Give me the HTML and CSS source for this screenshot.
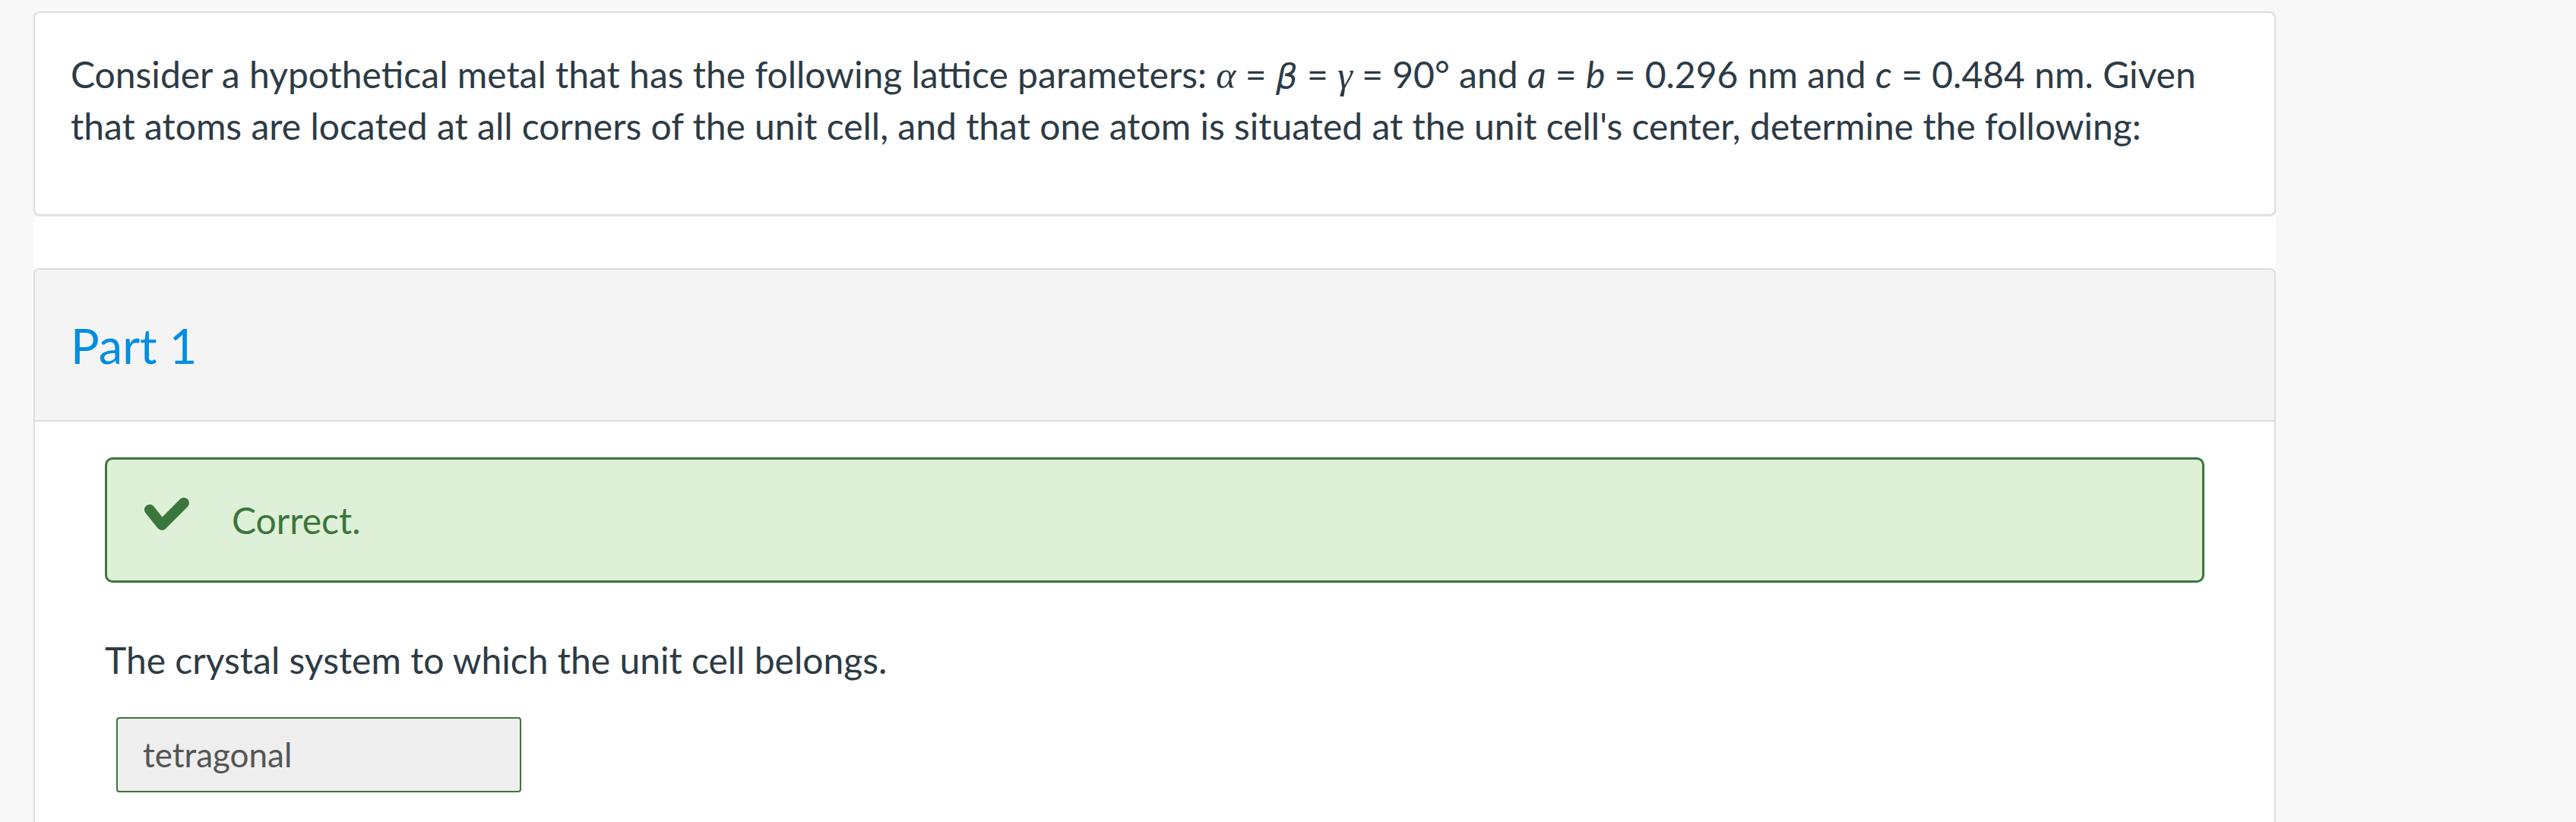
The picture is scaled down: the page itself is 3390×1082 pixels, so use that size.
FILE: index.html
```html
<!DOCTYPE html>
<html lang="en">
<head>
<meta charset="utf-8">
<title>Quiz question</title>
<link rel="stylesheet" href="styles.css">
</head>
<body>
<main class="column">
  <div class="intro">
    <section class="card intro-card">
      <p class="intro-text">Consider a hypothetical metal that has the following lattice parameters: <span class="math">α</span> = <span class="math beta">β</span> = <span class="math">γ</span> = 90° and <i>a</i> = <i>b</i> = 0.296 nm and <i>c</i> = 0.484 nm. Given that atoms are located at all corners of the unit cell, and that one atom is situated at the unit cell's center, determine the following:</p>
    </section>
  </div>
  <section class="card part">
    <header class="part-header">
      <h2 class="part-title">Part 1</h2>
    </header>
    <div class="part-body">
      <div class="alert-success">
        <svg class="check" viewBox="0 0 62 50" width="62" height="50" aria-hidden="true">
          <polyline points="9,18 25,38 54,9" fill="none" stroke="#3b763c" stroke-width="14" stroke-linecap="round" stroke-linejoin="round"/>
        </svg>
        <span class="alert-text">Correct.</span>
      </div>
      <p class="question">The crystal system to which the unit cell belongs.</p>
      <div class="answer">tetragonal</div>
    </div>
  </section>
</main>
</body>
</html>
```
FILE: styles.css
```css
html, body {
  margin: 0;
  padding: 0;
}
body {
  background: #f8f8f8;
  font-family: Lato, "Noto Sans", sans-serif;
  color: #2d3b45;
  height: 1082px;
  overflow: hidden;
}
.column {
  margin-left: 44px;
  width: 2951px;
  background: #ffffff;
  min-height: 1082px;
}
.intro {
  background: #f8f8f8;
  padding-top: 15px;
  padding-bottom: 1px;
}
.card {
  border: 2px solid #dddddd;
  border-radius: 8px;
  background: #ffffff;
}
.intro-card {
  padding: 47px 48px 50px 47px;
  box-shadow: 0 1px 2px rgba(0,0,0,0.06);
}
.intro-text {
  margin: 0 0 32px;
  font-size: 48px;
  line-height: 68px;
}
.intro-text i {
  font-style: italic;
}
.math {
  font-family: "Liberation Serif", "DejaVu Serif", serif;
  font-style: italic;
  font-size: 50px;
  line-height: 1;
}
.math.beta {
  font-family: "DejaVu Sans", Lato, sans-serif;
  font-size: 45px;
}
.part {
  margin-top: 68px;
  border-bottom: none;
  border-bottom-left-radius: 0;
  border-bottom-right-radius: 0;
  min-height: 740px;
}
.part-header {
  background: #f4f4f4;
  border-bottom: 2px solid #dddddd;
  border-radius: 6px 6px 0 0;
  height: 198px;
  display: flex;
  align-items: center;
  padding-left: 47px;
}
.part-title {
  margin: 0;
  font-size: 63px;
  font-weight: 400;
  color: #008ee2;
  line-height: 1;
}
.part-body {
  padding: 47px 92px 0 92px;
}
.alert-success {
  display: flex;
  align-items: center;
  height: 159px;
  border: 3px solid #3b763c;
  border-radius: 10px;
  background: #dff0d8;
  padding-left: 47px;
}
.check {
  display: block;
  margin-top: -14px;
}
.alert-text {
  margin-left: 55px;
  font-size: 48px;
  color: #3b763c;
}
.question {
  margin: 68px 0 0;
  font-size: 48px;
  line-height: 68px;
}
.answer {
  margin: 41px 0 0 15px;
  width: 496px;
  height: 95px;
  border: 2px solid #3b763c;
  border-radius: 4px;
  background: #eeeeee;
  color: #555555;
  font-size: 44px;
  line-height: 95px;
  padding-left: 33px;
  box-sizing: content-box;
}
```
